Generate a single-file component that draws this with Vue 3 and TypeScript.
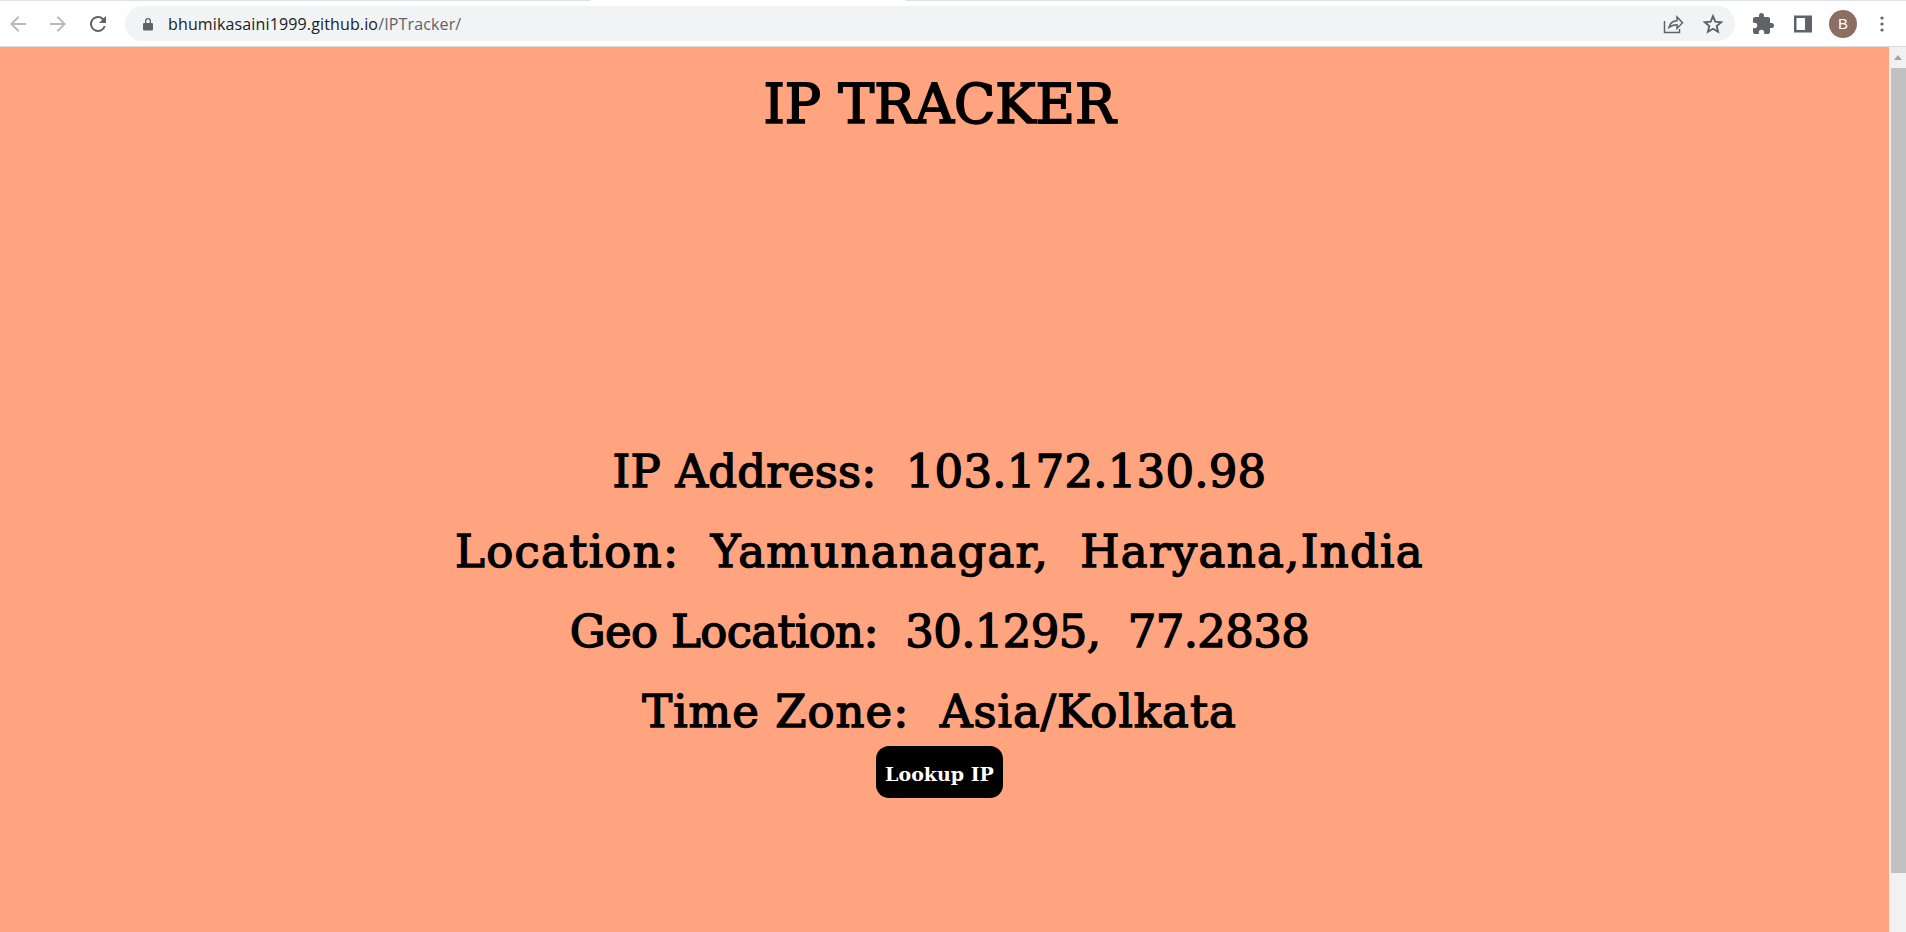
<script setup lang="ts">
interface Row {
  text: string
  tracking: number
}

const rows: Row[] = [
  { text: 'IP Address:  103.172.130.98', tracking: 0.2 },
  { text: 'Location:  Yamunanagar,  Haryana,India', tracking: 1.3 },
  { text: 'Geo Location:  30.1295,  77.2838', tracking: -0.65 },
  { text: 'Time Zone:  Asia/Kolkata', tracking: 1 },
]
</script>

<template>
  <div class="window">
    <div class="chrome">
      <div class="tab-edge"></div>
      <div class="nav">
        <svg class="ic" viewBox="0 0 24 24"><path d="M20 11H7.800l5.600-5.600L12 4l-8 8 8 8 1.400-1.400L7.800 13H20z" fill="#b8babd" /></svg>
        <svg class="ic" viewBox="0 0 24 24"><path d="M4 11h12.200l-5.600-5.600L12 4l8 8-8 8-1.400-1.400 5.600-5.600H4z" fill="#b8babd" /></svg>
        <svg class="ic" viewBox="0 0 24 24"><path d="M17.650 6.350A8 8 0 1 0 19.730 14h-2.080A6 6 0 1 1 12 6c1.660 0 3.140.69 4.220 1.780L13 11h7V4z" fill="#5f6368" /></svg>
      </div>
      <div class="omni">
        <svg class="lock" viewBox="0 0 12 14"><path d="M3 6V4a3 3 0 0 1 6 0v2h1a1 1 0 0 1 1 1v5.500a1 1 0 0 1-1 1H2a1 1 0 0 1-1-1V7a1 1 0 0 1 1-1zm1.300 0h3.400V4a1.700 1.700 0 0 0-3.400 0z" fill="#5f6368" /></svg>
        <span class="url">bhumikasaini1999.github.io<span class="path">/IPTracker/</span></span>
        <span class="grow"></span>
        <svg class="ic share" viewBox="0 0 24 24"><path d="M3.500 9v11.500h15V17M8 15.500c.8-4 3.800-6.600 8-6.800V5l5.500 5.800-5.500 5.700v-3.700c-3.300 0-5.900.9-8 2.700z" fill="none" stroke="#5f6368" stroke-width="1.500" /></svg>
        <svg class="ic star" viewBox="0 0 24 24"><path d="M12 4.200l2.300 5.500 5.900.5-4.500 3.900 1.400 5.700-5.100-3-5.100 3 1.400-5.700-4.500-3.900 5.900-.5z" fill="none" stroke="#5f6368" stroke-width="1.900" /></svg>
      </div>
      <div class="tools">
        <svg class="ic" viewBox="0 0 24 24"><path d="M20.500 11H19V7a2 2 0 0 0-2-2h-4V3.500a2.500 2.500 0 0 0-5 0V5H4a2 2 0 0 0-2 2v3.800h1.500a2.700 2.700 0 0 1 0 5.400H2V20a2 2 0 0 0 2 2h3.800v-1.500a2.700 2.700 0 0 1 5.400 0V22H17a2 2 0 0 0 2-2v-4h1.500a2.500 2.500 0 0 0 0-5z" fill="#5f6368" /></svg>
        <svg class="ic" viewBox="0 0 24 24"><path d="M3 3.500h18v17H3z M5.500 6v12H14V6z" fill="#5f6368" fill-rule="evenodd" /></svg>
        <div class="avatar">B</div>
        <svg class="dots" viewBox="0 0 4 16"><circle cx="2" cy="2" r="1.600" /><circle cx="2" cy="8" r="1.600" /><circle cx="2" cy="14" r="1.600" /></svg>
      </div>
    </div>
    <div class="viewport">
      <main class="page">
        <h1 class="title">IP TRACKER</h1>
        <div class="rows">
          <p v-for="r in rows" :key="r.text" class="row" :style="{ letterSpacing: r.tracking + 'px' }">{{ r.text }}</p>
        </div>
        <button class="lookup">Lookup IP</button>
      </main>
      <div class="scrollbar">
        <div class="arrow"><span class="tri"></span></div>
        <div class="thumb"></div>
      </div>
    </div>
  </div>
</template>

<style scoped>
.window { height: 932px; display: flex; flex-direction: column; overflow: hidden; background: #fff; font-family: "Liberation Sans", sans-serif; }
.chrome { position: relative; flex: none; height: 47px; display: flex; align-items: center; background: #fff; border-top: 1px solid #dee1e6; border-bottom: 1px solid #dadce0; box-sizing: border-box; padding-left: 6px; }
.tab-edge { position: absolute; left: 590px; top: -1px; width: 316px; height: 1px; background: #fff; }
.nav { display: flex; gap: 16px; align-items: center; width: 119px; }
.ic { width: 24px; height: 24px; display: block; flex: none; }
.omni { width: 1610px; height: 35px; border-radius: 18px; background: #f1f3f4; display: flex; align-items: center; padding: 0 10px 0 17px; box-sizing: border-box; }
.lock { width: 12px; height: 14px; margin-right: 14px; }
.url { font-size: 16px; letter-spacing: .14px; color: #202124; font-family: "Open Sans", "Liberation Sans", sans-serif; }
.path { color: #5f6368; }
.grow { flex: 1; }
.share { margin-right: 16px; }
.tools { display: flex; align-items: center; gap: 16px; padding-left: 16px; }
.avatar { width: 28px; height: 28px; margin-left: -2px; border-radius: 50%; background: #8d6e63; color: #fff; font-size: 15px; display: flex; align-items: center; justify-content: center; }
.dots { width: 4px; height: 16px; fill: #5f6368; margin-left: 7px; }
.viewport { flex: 1; display: flex; min-height: 0; }
.page { flex: 1; background: #ffa47f; display: flex; flex-direction: column; align-items: center; padding-right: 10px; color: #000; font-family: "DejaVu Serif", serif; }
.title { font-size: 54px; font-weight: 400; -webkit-text-stroke: 1.8px #000; margin: 30px 0 0; line-height: 56px; }
.rows { margin-top: 309px; display: flex; flex-direction: column; gap: 20px; align-items: center; }
.row { margin: 0; font-size: 45px; line-height: 60px; -webkit-text-stroke: 1.4px #000; white-space: pre; }
.lookup { background: #000; color: #fff; border: 0; border-radius: 13px; width: 127px; height: 52px; padding: 3px 0 0; font-family: "DejaVu Serif", serif; font-size: 19px; font-weight: 700; margin-top: 4px; }
.scrollbar { width: 17px; flex: none; background: #f1f1f1; display: flex; flex-direction: column; align-items: flex-end; }
.arrow { height: 21px; width: 17px; display: flex; align-items: center; justify-content: center; }
.tri { width: 0; height: 0; border-left: 4.5px solid transparent; border-right: 4.5px solid transparent; border-bottom: 5px solid #a3a3a3; }
.thumb { width: 15px; height: 805px; background: #c1c1c1; }
</style>
